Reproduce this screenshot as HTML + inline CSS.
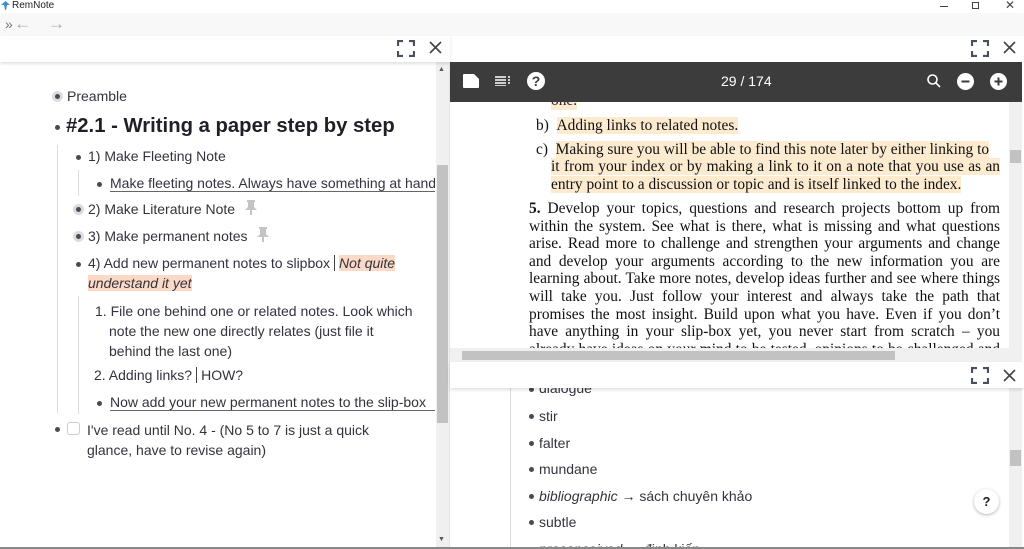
<!DOCTYPE html>
<html><head><meta charset="utf-8"><style>
*{margin:0;padding:0;box-sizing:border-box}
body{width:1024px;height:549px;overflow:hidden;background:#fff;position:relative;font-family:"Liberation Sans","DejaVu Sans",sans-serif;color:#2b2b33}
.a{position:absolute}
.t{font-size:14px;white-space:nowrap;color:#33333d}
.dot{position:absolute;width:5px;height:5px;border-radius:50%;background:#4a4a55}
.ring{position:absolute;width:11px;height:11px;border-radius:50%;background:#dcdce0}
.ring i{position:absolute;left:3px;top:3px;width:5px;height:5px;border-radius:50%;background:#4a4a55}
.pdf{font-family:"Liberation Serif",serif;font-size:15.4px;color:#111;position:absolute;left:529px;width:471px;text-align:justify;text-align-last:justify;white-space:nowrap;line-height:17px}
.hl{background:#fdebd0}
.vl{position:absolute;width:1px;background:#dcdce0}
.sb{position:absolute;background:#f0f0f0}
.bar{display:inline-block;width:1px;height:16px;background:#444;vertical-align:-3px;margin:0 4px}
</style></head><body>
<div class="a" style="left:0;top:0;width:1024px;height:13px;background:#fff"></div>
<svg class="a" style="left:1px;top:1px" width="9" height="10"><path d="M4.5 0 L9 4 L6 4 L5 9 L4 9 L3 4 L0 4Z" fill="#3a8fd8"/></svg>
<div class="a" style="left:12px;top:0;font-size:10px;color:#222">RemNote</div>
<div class="a" style="left:940px;top:6px;width:8px;height:1px;background:#444"></div>
<div class="a" style="left:972px;top:2px;width:7px;height:7px;border:1px solid #444"></div>
<div class="a" style="left:1005px;top:-2px;font-size:12px;color:#444">✕</div>
<div class="a" style="left:0;top:13px;width:1024px;height:23px;background:#f8f8f9"></div>
<div class="a" style="left:5px;top:16px;font-size:14px;color:#777">»</div>
<div class="a" style="left:14px;top:14px;font-size:17px;color:#aaa">←</div>
<div class="a" style="left:48px;top:14px;font-size:17px;color:#aaa">→</div>

<div class="a" style="left:0;top:36px;width:450px;height:26px;background:#fff;box-shadow:0 2px 3px rgba(0,0,0,.12);z-index:2"></div>
<svg class="a" style="left:397px;top:40px;z-index:3" width="18" height="17" fill="none" stroke="#4a4f5c" stroke-width="2.2"><path d="M1 6V1h5M12 1h5v5M17 11v5h-5M6 16H1v-5"/></svg>
<svg class="a" style="left:429px;top:41px;z-index:3" width="13" height="13" stroke="#444" stroke-width="1.6"><path d="M1 1L12 12M12 1L1 12"/></svg>
<div class="sb" style="left:436px;top:62px;width:13px;height:487px"></div>
<div class="a" style="left:437px;top:165px;width:11px;height:258px;background:#c2c2c2"></div>
<div class="a" style="left:438px;top:66px;font-size:7px;color:#555">▲</div>
<div class="a" style="left:438px;top:536px;font-size:7px;color:#555">▼</div>
<div class="a" style="left:449px;top:36px;width:1px;height:513px;background:#e4e4e4"></div>

<div class="ring" style="left:52px;top:91px"><i></i></div>
<div class="a t" style="left:67px;top:88px">Preamble</div>
<div class="dot" style="left:55px;top:125px"></div>
<div class="a" style="left:66px;top:115px;font-size:20.3px;font-weight:bold;color:#1f1f28;white-space:nowrap">#2.1 - Writing a paper step by step</div>
<div class="vl" style="left:57px;top:145px;height:268px"></div>
<div class="dot" style="left:76px;top:155px"></div>
<div class="a t" style="left:88px;top:148px">1) Make Fleeting Note</div>
<div class="vl" style="left:78px;top:170px;height:26px"></div>
<div class="dot" style="left:97px;top:182px"></div>
<div class="a t" style="left:110px;top:175px;width:325px;overflow:hidden;border-bottom:1px solid #666;line-height:16px">Make fleeting notes. Always have something at hand</div>
<div class="ring" style="left:73px;top:204px"><i></i></div>
<div class="a t" style="left:88px;top:201px">2) Make Literature Note</div>
<svg class="a" style="left:245px;top:200px" width="12" height="15" fill="#c4c4c4"><path d="M2 0H10V2H9V7L12 10H7V15H5V10H0L3 7V2H2Z"/></svg>
<div class="ring" style="left:73px;top:231px"><i></i></div>
<div class="a t" style="left:88px;top:228px">3) Make permanent notes</div>
<svg class="a" style="left:257px;top:227px" width="12" height="15" fill="#c4c4c4"><path d="M2 0H10V2H9V7L12 10H7V15H5V10H0L3 7V2H2Z"/></svg>
<div class="dot" style="left:76px;top:262px"></div>
<div class="a t" style="left:88px;top:255px">4) Add new permanent notes to slipbox<span class="bar"></span><span style="background:#fbd9c6;font-style:italic">Not quite</span></div>
<div class="a t" style="left:88px;top:275px;background:#fbd9c6;font-style:italic">understand it yet</div>
<div class="vl" style="left:78px;top:296px;height:118px"></div>
<div class="a t" style="left:95px;top:301px;line-height:20px;white-space:normal;width:340px">1. File one behind one or related notes. Look which<br><span style="padding-left:14px">note the new one directly relates (just file it</span><br><span style="padding-left:14px">behind the last one)</span></div>
<div class="a t" style="left:94px;top:367px">2. Adding links?<span class="bar"></span>HOW?</div>
<div class="dot" style="left:97px;top:401px"></div>
<div class="a t" style="left:110px;top:394px;width:325px;overflow:hidden;border-bottom:1px solid #666;line-height:16px">Now add your new permanent notes to the slip-box</div>
<div class="dot" style="left:55px;top:427px"></div>
<div class="a" style="left:67px;top:422px;width:13px;height:13px;border:1px solid #ccc;border-radius:3px"></div>
<div class="a t" style="left:87px;top:420px;line-height:20px">I've read until No. 4 - (No 5 to 7 is just a quick<br>glance, have to revise again)</div>

<div class="a" style="left:450px;top:36px;width:574px;height:26px;background:#fff"></div>
<svg class="a" style="left:971px;top:40px" width="18" height="17" fill="none" stroke="#4a4f5c" stroke-width="2.2"><path d="M1 6V1h5M12 1h5v5M17 11v5h-5M6 16H1v-5"/></svg>
<svg class="a" style="left:1003px;top:41px" width="13" height="13" stroke="#444" stroke-width="1.6"><path d="M1 1L12 12M12 1L1 12"/></svg>
<div class="a" style="left:450px;top:62px;width:572px;height:40px;background:#3c3c3c;z-index:2"></div>
<svg class="a" style="left:463px;top:74px;z-index:3" width="16" height="14"><path d="M0 1Q0 0 1 0H11L16 5V13Q16 14 15 14H1Q0 14 0 13Z" fill="#fff"/></svg>
<svg class="a" style="left:495px;top:76px;z-index:3" width="15" height="10" stroke="#fff" stroke-width="1.6"><path d="M0 1H11M0 4H11M0 7H11M0 10H11M13 1H15M13 4H15M13 7H15"/></svg>
<div class="a" style="left:527px;top:72px;width:18px;height:18px;border-radius:50%;background:#fff;color:#3c3c3c;font-weight:bold;font-size:14px;text-align:center;line-height:18px;z-index:3">?</div>
<div class="a" style="left:721px;top:73px;font-size:14px;color:#fff;z-index:3">29 / 174</div>
<svg class="a" style="left:927px;top:74px;z-index:3" width="14" height="14" fill="none" stroke="#fff" stroke-width="1.6"><circle cx="5.5" cy="5.5" r="4.5"/><path d="M9 9L13 13"/></svg>
<svg class="a" style="left:957px;top:73px;z-index:3" width="17" height="17"><circle cx="8.5" cy="8.5" r="8.5" fill="#fff"/><path d="M4.5 8.5H12.5" stroke="#3c3c3c" stroke-width="2"/></svg>
<svg class="a" style="left:990px;top:73px;z-index:3" width="17" height="17"><circle cx="8.5" cy="8.5" r="8.5" fill="#fff"/><path d="M4.5 8.5H12.5M8.5 4.5V12.5" stroke="#3c3c3c" stroke-width="2"/></svg>
<div class="a" style="left:450px;top:102px;width:560px;height:246px;overflow:hidden">
 <div style="position:absolute;left:101px;top:-10px;font-family:'Liberation Serif',serif;font-size:15.4px;background:#fdebd0">one.</div>
 <div style="position:absolute;left:86px;top:15px;font-family:'Liberation Serif',serif;font-size:15.4px;white-space:nowrap;color:#111">b)&nbsp;&nbsp;<span class="hl">Adding links to related notes.</span></div>
 <div style="position:absolute;left:86px;top:39px;font-family:'Liberation Serif',serif;font-size:15.4px;white-space:nowrap;color:#111">c)&nbsp;&nbsp;<span class="hl">Making sure you will be able to find this note later by either linking to</span></div>
</div>
<div class="pdf hl" style="left:551px;width:449px;top:158px">it from your index or by making a link to it on a note that you use as an</div>
<div class="pdf" style="left:551px;width:416px;top:176px;text-align-last:left"><span class="hl">entry point to a discussion or topic and is itself linked to the index.</span></div>
<div class="a" style="left:450px;top:102px;width:560px;height:246px;overflow:hidden">
<div class="pdf" style="left:79px;top:98px"><b>5.</b> Develop your topics, questions and research projects bottom up from</div>
<div class="pdf" style="left:79px;top:115.6px">within the system. See what is there, what is missing and what questions</div>
<div class="pdf" style="left:79px;top:133.2px">arise. Read more to challenge and strengthen your arguments and change</div>
<div class="pdf" style="left:79px;top:150.8px">and develop your arguments according to the new information you are</div>
<div class="pdf" style="left:79px;top:168.4px">learning about. Take more notes, develop ideas further and see where things</div>
<div class="pdf" style="left:79px;top:186px">will take you. Just follow your interest and always take the path that</div>
<div class="pdf" style="left:79px;top:203.6px">promises the most insight. Build upon what you have. Even if you don’t</div>
<div class="pdf" style="left:79px;top:221.2px">have anything in your slip-box yet, you never start from scratch – you</div>
<div class="pdf" style="left:79px;top:238.8px">already have ideas on your mind to be tested, opinions to be challenged and</div>
</div>
<div class="sb" style="left:1009px;top:102px;width:13px;height:246px"></div>
<div class="a" style="left:1010px;top:150px;width:11px;height:13px;background:#c2c2c2"></div>
<div class="sb" style="left:450px;top:348px;width:572px;height:14px"></div>
<div class="a" style="left:462px;top:351px;width:433px;height:9px;background:#c2c2c2"></div>
<div class="a" style="left:450px;top:362px;width:574px;height:26px;background:#fff;box-shadow:0 2px 3px rgba(0,0,0,.12);z-index:2"></div>
<svg class="a" style="left:971px;top:367px;z-index:3" width="18" height="17" fill="none" stroke="#4a4f5c" stroke-width="2.2"><path d="M1 6V1h5M12 1h5v5M17 11v5h-5M6 16H1v-5"/></svg>
<svg class="a" style="left:1003px;top:369px;z-index:3" width="13" height="13" stroke="#444" stroke-width="1.6"><path d="M1 1L12 12M12 1L1 12"/></svg>
<div class="vl" style="left:510px;top:388px;height:161px"></div>
<div class="a" style="left:450px;top:370px;width:559px;height:179px;overflow:hidden">
 <div class="dot" style="left:79px;top:17px"></div><div class="a t" style="left:89px;top:10px">dialogue</div>
 <div class="dot" style="left:79px;top:44px"></div><div class="a t" style="left:89px;top:38px">stir</div>
 <div class="dot" style="left:79px;top:71px"></div><div class="a t" style="left:89px;top:65px">falter</div>
 <div class="dot" style="left:79px;top:97px"></div><div class="a t" style="left:89px;top:91px">mundane</div>
 <div class="dot" style="left:79px;top:124px"></div><div class="a t" style="left:89px;top:118px"><i>bibliographic</i> → sách chuyên khảo</div>
 <div class="dot" style="left:79px;top:150px"></div><div class="a t" style="left:89px;top:144px">subtle</div>
 <div class="dot" style="left:79px;top:177px"></div><div class="a t" style="left:89px;top:171px"><i>preconceived</i> → định kiến</div>
</div>
<div class="sb" style="left:1009px;top:388px;width:13px;height:159px"></div>
<div class="a" style="left:1010px;top:450px;width:11px;height:16px;background:#c2c2c2"></div>
<div class="a" style="left:974px;top:489px;width:25px;height:25px;border-radius:50%;background:#fff;box-shadow:0 1px 3px rgba(0,0,0,.3);font-weight:bold;font-size:13px;text-align:center;line-height:25px;color:#222">?</div>
<div class="a" style="left:0;top:547px;width:1024px;height:2px;background:#888"></div>
</body></html>
